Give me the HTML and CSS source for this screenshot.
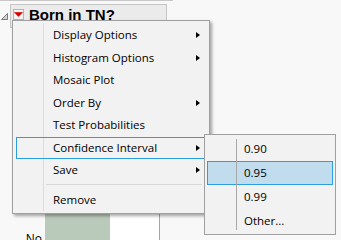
FILE: index.html
```html
<!DOCTYPE html>
<html>
<head>
<meta charset="utf-8">
<link rel="stylesheet" href="styles.css">
</head>
<body>
<div class="report">
  <div class="topline"></div>
  <div class="outline-row">
    <svg class="disclosure" width="8" height="8" viewBox="0 0 8 8"><polygon points="6.5,0.5 6.5,6.5 0.5,6.5" fill="#d4d4d4" stroke="#7a7a7a" stroke-width="1"/></svg>
    <div class="title-box">
      <span class="hotspot"><svg width="9" height="5" viewBox="0 0 9 5"><polygon points="0.5,0.5 8.5,0.5 4.5,4.5" fill="#d40000" stroke="#d40000" stroke-width="0.6"/></svg></span>
      <span class="title">Born in TN?</span>
    </div>
  </div>
  <div class="plot-row">
    <div class="axis"><span class="axis-label">No</span></div>
    <div class="plot"><div class="bar"></div></div>
  </div>
</div>

<div class="menu">
  <div class="item"><span class="label">Display Options</span><span class="arrow"></span></div>
  <div class="item"><span class="label">Histogram Options</span><span class="arrow"></span></div>
  <div class="item"><span class="label">Mosaic Plot</span></div>
  <div class="item"><span class="label">Order By</span><span class="arrow"></span></div>
  <div class="item"><span class="label">Test Probabilities</span></div>
  <div class="item open"><span class="label">Confidence Interval</span><span class="arrow"></span></div>
  <div class="item"><span class="label">Save</span><span class="arrow"></span></div>
  <div class="separator"></div>
  <div class="item"><span class="label">Remove</span></div>

  <div class="submenu">
    <div class="subitem"><span class="label">0.90</span></div>
    <div class="subitem selected"><span class="label">0.95</span></div>
    <div class="subitem"><span class="label">0.99</span></div>
    <div class="subitem"><span class="label">Other...</span></div>
  </div>
</div>
</body>
</html>
```

FILE: styles.css
```css
html, body {
  margin: 0;
  padding: 0;
}
body {
  width: 341px;
  height: 240px;
  overflow: hidden;
  background: #f8f8f8;
  font-family: "Open Sans", "Noto Sans", sans-serif;
  font-size: 11.5px;
  color: #000;
  position: relative;
}
.report {
  display: flex;
  flex-direction: column;
}
.topline {
  width: 173px;
  height: 0;
  border-top: 1px solid #c8c8c8;
}
.outline-row {
  display: flex;
  align-items: flex-start;
  margin-top: 3px;
}
.disclosure {
  margin: 9px 0 0 1px;
  flex: none;
}
.title-box {
  margin-left: 1px;
  width: 155px;
  height: 22px;
  border: 1px solid #c6c6c6;
  background: #ebebeb;
  display: flex;
  align-items: flex-start;
}
.hotspot {
  margin: 4px 0 0 2px;
  width: 11px;
  height: 11px;
  border: 1px solid #b4b4b4;
  background: #f4f4f4;
  display: flex;
  align-items: flex-start;
  justify-content: center;
  padding-top: 2px;
  box-sizing: border-box;
}
.hotspot svg { display: block; }
.title {
  margin-left: 5px;
  font-family: "Liberation Sans", Arial, sans-serif;
  font-weight: bold;
  font-size: 15px;
  line-height: 18px;
  margin-top: 1px;
  color: #000;
}
.plot-row {
  display: flex;
  margin-top: 13px;
  height: 220px;
}
.axis {
  width: 45px;
  flex: none;
  display: flex;
  justify-content: flex-end;
}
.axis-label {
  padding-top: 190px;
  padding-right: 3px;
  line-height: 16px;
  font-size: 12px;
}
.plot {
  width: 114px;
  background: #ffffff;
  border-right: 1px solid #a6a6a6;
  display: flex;
}
.bar {
  width: 65px;
  background: #bacaba;
}

/* Context menu (overlay) */
.menu {
  position: absolute;
  left: 12px;
  top: 20px;
  width: 198px;
  box-sizing: border-box;
  border: 1px solid #a0a0a0;
  background: #f2f2f2;
  padding: 3px 3px 1.5px 3px;
  box-shadow: 2px 2px 3px rgba(0, 0, 0, 0.35);
}
.menu::before {
  content: "";
  position: absolute;
  left: 30px;
  top: 2px;
  bottom: 2px;
  width: 1px;
  background: #dcdcdc;
}
.item {
  position: relative;
  height: 22.5px;
  box-sizing: border-box;
  border: 1px solid transparent;
  padding: 0 5px 0 36px;
  display: flex;
  align-items: center;
  justify-content: space-between;
}
.item.open {
  border-color: #2a9ee0;
}
.label {
  white-space: nowrap;
  line-height: 16px;
}
.arrow {
  width: 0;
  height: 0;
  border-left: 4px solid #000;
  border-top: 3.5px solid transparent;
  border-bottom: 3.5px solid transparent;
}
.separator {
  height: 1px;
  background: #d7d7d7;
  margin: 2.5px 4px 4px 30px;
}

.submenu {
  position: absolute;
  left: 191px;
  top: 113px;
  width: 132px;
  box-sizing: border-box;
  border: 1px solid #a0a0a0;
  background: #f2f2f2;
  padding: 2px 2px 1px 2px;
}
.submenu::before {
  content: "";
  position: absolute;
  left: 31px;
  top: 4px;
  bottom: 4px;
  width: 1px;
  background: #a8a8a8;
  z-index: 1;
}
.subitem {
  height: 24px;
  box-sizing: border-box;
  border: 1px solid transparent;
  padding-left: 36px;
  display: flex;
  align-items: center;
}
.subitem.selected {
  background: #c1dcec;
  border-color: #2a9ee0;
}
```
